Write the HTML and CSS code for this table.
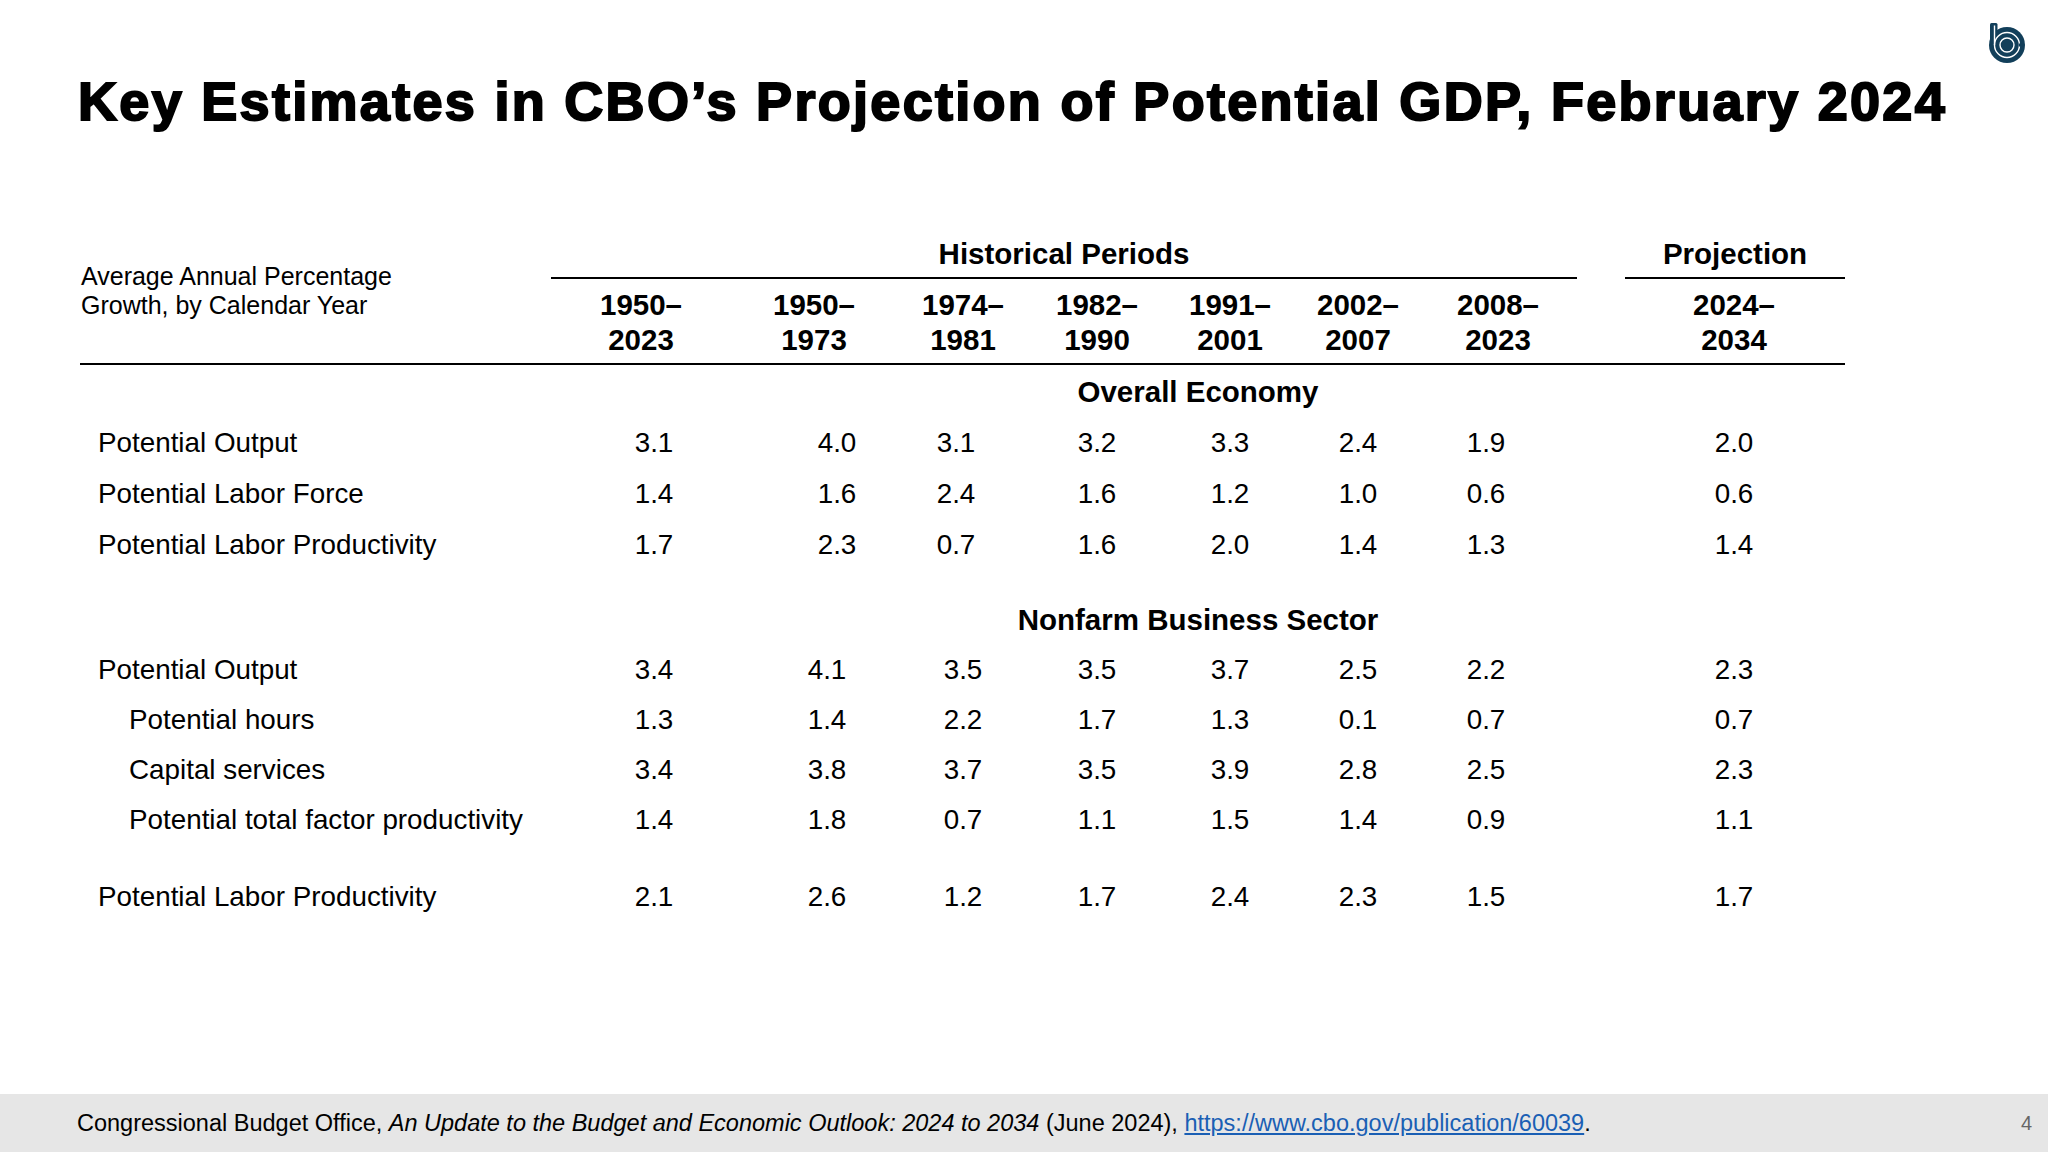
FILE: index.html
```html
<!DOCTYPE html>
<html lang="en">
<head>
<meta charset="utf-8">
<title>Key Estimates in CBO's Projection of Potential GDP, February 2024</title>
<link rel="stylesheet" href="styles.css">
</head>
<body>
<div class="slide">
  <header class="top">
    <h1 class="title">Key Estimates in CBO’s Projection of Potential GDP, February 2024</h1>
    <svg class="logo" viewBox="0 0 40 44" width="40" height="44" aria-label="CBO">
      <circle cx="20" cy="24" r="18" fill="#123f5a"/>
      <rect x="3" y="2" width="7.5" height="22" rx="1.5" fill="#123f5a"/>
      <circle cx="20" cy="24" r="12.5" fill="none" stroke="#fff" stroke-width="1.4"/>
      <circle cx="20" cy="24" r="7" fill="none" stroke="#fff" stroke-width="1.4"/>
      <line x1="7.5" y1="4.5" x2="7.5" y2="24" stroke="#fff" stroke-width="1.4"/>
      <rect x="32" y="22.5" width="4" height="3" fill="#123f5a"/>
    </svg>
  </header>

  <main class="table">
    <div class="thead">
      <div class="stub">Average Annual Percentage<br>Growth, by Calendar Year</div>
      <div class="group hist">Historical Periods</div>
      <div class="group proj">Projection</div>
      <div class="yr c1">1950–<br>2023</div>
      <div class="yr c2">1950–<br>1973</div>
      <div class="yr c3">1974–<br>1981</div>
      <div class="yr c4">1982–<br>1990</div>
      <div class="yr c5">1991–<br>2001</div>
      <div class="yr c6">2002–<br>2007</div>
      <div class="yr c7">2008–<br>2023</div>
      <div class="yr c8">2024–<br>2034</div>
    </div>

    <div class="section s1">
      <div class="sect-title">Overall Economy</div>
      <div class="row">
        <div class="label">Potential Output</div>
        <div class="v c1">3.1</div><div class="v c2">4.0</div><div class="v c3">3.1</div><div class="v c4">3.2</div><div class="v c5">3.3</div><div class="v c6">2.4</div><div class="v c7">1.9</div><div class="v c8">2.0</div>
      </div>
      <div class="row">
        <div class="label">Potential Labor Force</div>
        <div class="v c1">1.4</div><div class="v c2">1.6</div><div class="v c3">2.4</div><div class="v c4">1.6</div><div class="v c5">1.2</div><div class="v c6">1.0</div><div class="v c7">0.6</div><div class="v c8">0.6</div>
      </div>
      <div class="row">
        <div class="label">Potential Labor Productivity</div>
        <div class="v c1">1.7</div><div class="v c2">2.3</div><div class="v c3">0.7</div><div class="v c4">1.6</div><div class="v c5">2.0</div><div class="v c6">1.4</div><div class="v c7">1.3</div><div class="v c8">1.4</div>
      </div>
    </div>

    <div class="section s2">
      <div class="sect-title">Nonfarm Business Sector</div>
      <div class="row">
        <div class="label">Potential Output</div>
        <div class="v c1">3.4</div><div class="v c2">4.1</div><div class="v c3">3.5</div><div class="v c4">3.5</div><div class="v c5">3.7</div><div class="v c6">2.5</div><div class="v c7">2.2</div><div class="v c8">2.3</div>
      </div>
      <div class="row">
        <div class="label sub">Potential hours</div>
        <div class="v c1">1.3</div><div class="v c2">1.4</div><div class="v c3">2.2</div><div class="v c4">1.7</div><div class="v c5">1.3</div><div class="v c6">0.1</div><div class="v c7">0.7</div><div class="v c8">0.7</div>
      </div>
      <div class="row">
        <div class="label sub">Capital services</div>
        <div class="v c1">3.4</div><div class="v c2">3.8</div><div class="v c3">3.7</div><div class="v c4">3.5</div><div class="v c5">3.9</div><div class="v c6">2.8</div><div class="v c7">2.5</div><div class="v c8">2.3</div>
      </div>
      <div class="row">
        <div class="label sub">Potential total factor productivity</div>
        <div class="v c1">1.4</div><div class="v c2">1.8</div><div class="v c3">0.7</div><div class="v c4">1.1</div><div class="v c5">1.5</div><div class="v c6">1.4</div><div class="v c7">0.9</div><div class="v c8">1.1</div>
      </div>
      <div class="row last">
        <div class="label">Potential Labor Productivity</div>
        <div class="v c1">2.1</div><div class="v c2">2.6</div><div class="v c3">1.2</div><div class="v c4">1.7</div><div class="v c5">2.4</div><div class="v c6">2.3</div><div class="v c7">1.5</div><div class="v c8">1.7</div>
      </div>
    </div>
  </main>

  <footer class="foot">
    <p class="source">Congressional Budget Office, <i>An Update to the Budget and Economic Outlook: 2024 to 2034</i> (June 2024), <a href="https://www.cbo.gov/publication/60039">https://www.cbo.gov/publication/60039</a>.</p>
    <span class="page">4</span>
  </footer>
</div>
</body>
</html>
```

FILE: styles.css
```css
* { box-sizing: border-box; }

html, body {
  margin: 0;
  padding: 0;
  background: #ffffff;
}

body {
  font-family: "Liberation Sans", Arial, sans-serif;
  color: #000;
}

.slide {
  width: 2048px;
  height: 1152px;
  display: flex;
  flex-direction: column;
  overflow: hidden;
}

/* ---------- header ---------- */
.top {
  display: flex;
  justify-content: space-between;
  align-items: flex-start;
  padding: 0 21px 0 78px;
  height: 237px;
}

.title {
  margin: 74px 0 0 0;
  font-size: 54px;
  line-height: 1;
  font-weight: 700;
  letter-spacing: 2.3px;
  -webkit-text-stroke: 2px #000;
  white-space: nowrap;
}

.logo {
  margin-top: 21px;
  display: block;
}

/* ---------- table ---------- */
.table {
  flex: 1;
  margin-left: 80px;
  width: 1765px;
}

.thead,
.row {
  display: grid;
  grid-template-columns:
    501px 120px 53px 120px 29px 120px 14px 120px 13px 120px 8px 120px 20px 120px 116px 120px 51px;
}

.thead {
  grid-template-rows: auto auto;
  border-bottom: 2px solid #000;
}

.stub {
  grid-column: 1;
  grid-row: 1 / 3;
  font-size: 25px;
  line-height: 29px;
  padding: 25px 0 0 1px;
}

.group {
  grid-row: 1;
  font-size: 29.5px;
  font-weight: 700;
  line-height: 34px;
  text-align: center;
  padding-bottom: 6px;
  border-bottom: 2px solid #000;
}

.hist {
  grid-column: 2 / 15;
  margin-left: -30px;
  margin-right: -19px;
}

.proj {
  grid-column: 16 / 18;
  margin-left: -49px;
}

.yr {
  grid-row: 2;
  font-size: 29.5px;
  font-weight: 700;
  line-height: 34.5px;
  text-align: center;
  padding: 9px 0 6px;
}

.c1 { grid-column: 2; }
.c2 { grid-column: 4; }
.c3 { grid-column: 6; }
.c4 { grid-column: 8; }
.c5 { grid-column: 10; }
.c6 { grid-column: 12; }
.c7 { grid-column: 14; }
.c8 { grid-column: 16; }

.sect-title {
  padding-left: 471px;
  text-align: center;
  font-size: 29.5px;
  font-weight: 700;
  line-height: 34px;
}

.s1 .sect-title { padding-top: 10px; padding-bottom: 8px; }
.s2 .sect-title { padding-top: 33px; padding-bottom: 8px; }

.row {
  font-size: 27.8px;
  line-height: 34px;
}

.s1 .row { padding: 8.5px 0; }
.s2 .row { padding: 8px 0; }
.s2 .row.last { margin-top: 27px; }

.label {
  grid-column: 1;
  padding-left: 18px;
  white-space: nowrap;
}

.label.sub { padding-left: 49px; }

.v { text-align: center; }

/* values sit slightly off the header centres, as in the source slide */
.v.c1 { padding-left: 26px; }
.s1 .v.c2 { padding-left: 46px; }
.s2 .v.c2 { padding-left: 26px; }
.s1 .v.c3 { padding-right: 14px; }
.v.c7 { padding-right: 24px; }

/* ---------- footer ---------- */
.foot {
  height: 58px;
  flex: none;
  background: #e6e6e6;
  display: flex;
  align-items: center;
  justify-content: space-between;
  padding: 0 16px 0 77px;
}

.source {
  margin: 0;
  font-size: 23.5px;
  line-height: 26px;
  color: #000;
}

.source a {
  color: #1a5fb4;
  text-decoration: underline;
}

.page {
  font-size: 20px;
  color: #666666;
}
```
